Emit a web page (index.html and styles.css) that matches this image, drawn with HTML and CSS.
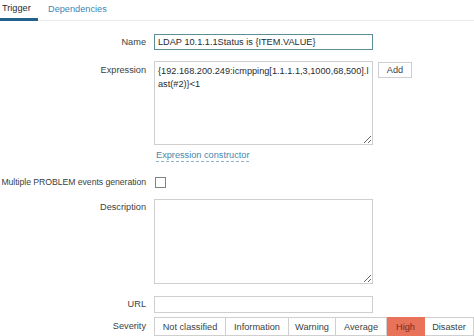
FILE: index.html
```html
<!DOCTYPE html>
<html lang="en">
<head>
<meta charset="UTF-8" />
<meta name="viewport" content="width=device-width, initial-scale=1" />
<title>Trigger</title>
<link rel="stylesheet" href="styles.css">
</head>
<body>

<div class="tabs">
  <span class="tab active">Trigger</span>
  <span class="tab">Dependencies</span>
</div>

<form class="form">
  <div class="row row-name">
    <label class="lbl" for="name">Name</label>
    <input type="text" id="name" class="field focused" value="LDAP 10.1.1.1Status is {ITEM.VALUE}" />
  </div>

  <div class="row row-expr">
    <label class="lbl top" for="expr">Expression</label>
    <textarea id="expr" class="field area">{192.168.200.249:icmpping[1.1.1.1,3,1000,68,500].l
ast(#2)}&lt;1</textarea>
    <button type="button" class="btn-add">Add</button>
  </div>

  <div class="row row-link">
    <span class="lbl"></span>
    <a class="link">Expression constructor</a>
  </div>

  <div class="row row-check">
    <label class="lbl narrow" for="multi">Multiple PROBLEM events generation</label>
    <span class="check" id="multi"></span>
  </div>

  <div class="row row-desc">
    <label class="lbl top2" for="desc">Description</label>
    <textarea id="desc" class="field area"></textarea>
  </div>

  <div class="row row-url">
    <label class="lbl" for="url">URL</label>
    <input type="text" id="url" class="field" />
  </div>

  <div class="row row-sev">
    <span class="lbl">Severity</span>
    <div class="sev">
      <span class="sev-btn w1">Not classified</span>
      <span class="sev-btn w2">Information</span>
      <span class="sev-btn w3">Warning</span>
      <span class="sev-btn w4">Average</span>
      <span class="sev-btn w5 high">High</span>
      <span class="sev-btn w6">Disaster</span>
    </div>
  </div>
</form>

</body>
</html>
```

FILE: styles.css
```css
body { margin: 0; font-family: "Liberation Sans", Arial, sans-serif; font-size: 9.2px; color: #2b3236; background: #fff; overflow: hidden; }

.tabs { display: flex; height: 20px; border-bottom: 1px solid #e8ebec; }
.tab { display: flex; align-items: center; height: 18px; padding: 0 10px; color: #3d86b5; }
.tab.active { padding: 0 8px 0 2px; width: 28px; color: #1f2c33; border-bottom: 3px solid #22608e; height: 15px; padding-bottom: 3px; }

.form { display: flex; flex-direction: column; }
.row { display: flex; align-items: center; }
.lbl { display: flex; justify-content: flex-end; width: 146px; flex: none; padding-right: 8px; white-space: nowrap; color: #3a3f42; line-height: 13px; }
.lbl.top { align-self: flex-start; padding-top: 3px; }
.lbl.top2 { align-self: flex-start; padding-top: 2px; }
.lbl.narrow { font-size: 8.7px; letter-spacing: -0.05px; }

.field { box-sizing: border-box; width: 219px; margin: 0; border: 1px solid #cfcfcf; background: #fff; font-family: inherit; font-size: 9.2px; color: #1f2c33; padding: 0 3px; }
.field.focused { border-color: #5d8e98; }
.area { height: 84px; padding: 3px 3px; line-height: 13px; resize: both; overflow: hidden; }

.row-name { margin-top: 13px; }
.row-name .field { height: 16px; }
.row-expr { margin-top: 11px; align-items: flex-start; }
.btn-add { margin: 1px 0 0 5px; height: 16px; width: 34px; padding: 0; border: 1px solid #cfcfcf; background: #fff; font-family: inherit; font-size: 9.2px; color: #3a3f42; }

.row-link { margin-top: 4px; height: 13px; }
.link { margin-left: 2px; color: #4a86ad; line-height: 12px; border-bottom: 1px dashed #8fb2c8; }

.row-check { margin-top: 14px; height: 13px; }
.check { box-sizing: border-box; width: 11px; height: 11px; margin-left: 1px; border: 1px solid #7d8487; background: #fff; }

.row-desc { margin-top: 10px; align-items: flex-start; }
.row-desc .area { height: 85px; }

.row-url { margin-top: 12px; }
.row-url .field { height: 17px; }

.row-sev { margin-top: 4px; }
.sev { display: flex; }
.sev-btn { box-sizing: border-box; display: flex; align-items: center; justify-content: center; height: 19px; border: 1px solid #cfcfcf; border-left: none; background: #fff; color: #3a3f42; }
.sev-btn.w1 { width: 72px; border-left: 1px solid #cfcfcf; }
.sev-btn.w2 { width: 63px; }
.sev-btn.w3 { width: 47px; }
.sev-btn.w4 { width: 51px; }
.sev-btn.w5 { width: 38px; }
.sev-btn.w6 { width: 49px; }
.sev-btn.high { background: #e8735a; border-color: #e8735a; color: #7a2a1a; }
```
